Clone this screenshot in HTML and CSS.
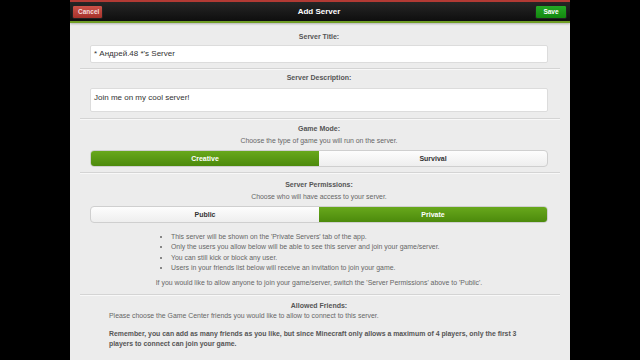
FILE: index.html
```html
<!DOCTYPE html>
<html lang="en">

<head>
    <meta charset="UTF-8">
    <meta name="viewport" content="width=device-width, initial-scale=1.0">
    <title>Add Server</title>
    <link rel="stylesheet" href="styles.css">
</head>

<body>
    <div class="screen">
        <header class="topbar">
            <button class="btn btn-cancel">Cancel</button>
            <h1>Add Server</h1>
            <button class="btn btn-save">Save</button>
        </header>

        <main class="form">
            <section class="group group-title">
                <h2>Server Title:</h2>
                <div class="field">* Андрей.48 *'s Server</div>
            </section>

            <section class="group group-desc">
                <h2>Server Description:</h2>
                <div class="field field-tall">Join me on my cool server!</div>
            </section>

            <section class="group group-mode">
                <h2>Game Mode:</h2>
                <p class="hint">Choose the type of game you will run on the server.</p>
                <div class="segmented">
                    <span class="seg active">Creative</span>
                    <span class="seg">Survival</span>
                </div>
            </section>

            <section class="group group-perm">
                <h2>Server Permissions:</h2>
                <p class="hint">Choose who will have access to your server.</p>
                <div class="segmented">
                    <span class="seg">Public</span>
                    <span class="seg active">Private</span>
                </div>

                <ul class="notes">
                    <li>This server will be shown on the 'Private Servers' tab of the app.</li>
                    <li>Only the users you allow below will be able to see this server and join your game/server.</li>
                    <li>You can still kick or block any user.</li>
                    <li>Users in your friends list below will receive an invitation to join your game.</li>
                </ul>
                <p class="hint switch-note">If you would like to allow anyone to join your game/server, switch the 'Server Permissions' above to 'Public'.</p>
            </section>

            <section class="group group-friends">
                <h2>Allowed Friends:</h2>
                <p class="friends-text">Please choose the Game Center friends you would like to allow to connect to this server.</p>
                <p class="friends-text friends-warn">Remember, you can add as many friends as you like, but since Minecraft only allows a maximum of 4 players, only the first 3 players to connect can join your game.</p>
            </section>
        </main>
    </div>
</body>

</html>
```

FILE: styles.css
```css
/* General Styles */
body {
    margin: 0;
    padding: 0;
    background-color: #000;
    font-family: "Liberation Sans", Arial, sans-serif;
    color: #666;
}

.screen {
    width: 500px;
    height: 360px;
    margin: 0 auto;
    background-color: #ececec;
    overflow: hidden;
}

/* Top bar */
.topbar {
    display: flex;
    align-items: center;
    justify-content: space-between;
    height: 19px;
    padding: 0 3px 0 2px;
    border-top: 2px solid #b23a34;
    border-bottom: 2px solid #6f9d25;
    background: linear-gradient(#262626, #0e0e0e);
    box-shadow: 0 1px 2px rgba(0, 0, 0, 0.25);
}

.topbar h1 {
    margin: 0;
    flex: 1;
    text-align: center;
    font-size: 8px;
    font-weight: bold;
    color: #fff;
}

.btn {
    height: 14px;
    padding: 0 5px;
    border: 1px solid #222;
    border-radius: 2px;
    font-family: "Liberation Sans", Arial, sans-serif;
    font-size: 6.5px;
    font-weight: bold;
    color: #fff;
    line-height: 12px;
}

.btn-cancel {
    width: 31px;
    background: linear-gradient(#cc5248, #a6322b);
    color: #f3dcdc;
}

.btn-save {
    width: 32px;
    background: linear-gradient(#24a824, #13880f);
}

/* Form groups */
.group {
    margin: 0 10px;
    padding: 0 12px 0 10px;
    border-bottom: 1px solid #d4d4d4;
    box-shadow: 0 1px 0 #f8f8f8;
}

.group h2 {
    margin: 0;
    font-size: 7px;
    line-height: 10px;
    font-weight: bold;
    text-align: center;
    color: #555;
}

.hint {
    margin: 1px 0 0;
    font-size: 6.9px;
    line-height: 11px;
    text-align: center;
    color: #666;
}

.field {
    box-sizing: border-box;
    height: 18px;
    padding: 0 3px;
    background-color: #fff;
    border: 1px solid #dcdcdc;
    border-radius: 2px;
    font-size: 8px;
    line-height: 16px;
    color: #333;
}

.field-tall {
    height: 24px;
    line-height: 16px;
    padding-top: 1px;
}

.group-title {
    padding-top: 9px;
    padding-bottom: 5px;
}

.group-title h2 {
    margin-bottom: 3px;
}

.group-desc {
    padding-top: 4px;
    padding-bottom: 6px;
}

.group-desc h2 {
    margin-bottom: 5px;
}

.group-mode {
    padding-top: 5px;
    padding-bottom: 5px;
}

.group-perm {
    padding-top: 7px;
    padding-bottom: 6px;
}

/* Segmented control */
.segmented {
    display: flex;
    height: 15px;
    margin-top: 4px;
    border: 1px solid #cfcfcf;
    border-radius: 4px;
    background: linear-gradient(#fdfdfd, #eeeeee);
    overflow: hidden;
}

.seg {
    flex: 1;
    font-size: 7px;
    font-weight: bold;
    line-height: 15px;
    text-align: center;
    color: #333;
}

.seg.active {
    background: linear-gradient(#68a81c, #4c8a0c);
    color: #fff;
}

/* Notes */
.notes {
    margin: 9px 0 0;
    padding-left: 81px;
    font-size: 6.9px;
    line-height: 10.3px;
    color: #666;
}

.switch-note {
    margin-top: 4px;
}

/* Allowed friends */
.group-friends {
    padding-top: 6px;
    border-bottom: none;
    box-shadow: none;
}

.friends-text {
    margin: 0;
    padding-left: 19px;
    max-width: 412px;
    font-size: 6.9px;
    line-height: 10px;
    color: #666;
}

.friends-warn {
    margin-top: 8px;
    font-weight: bold;
    color: #555;
}
```
